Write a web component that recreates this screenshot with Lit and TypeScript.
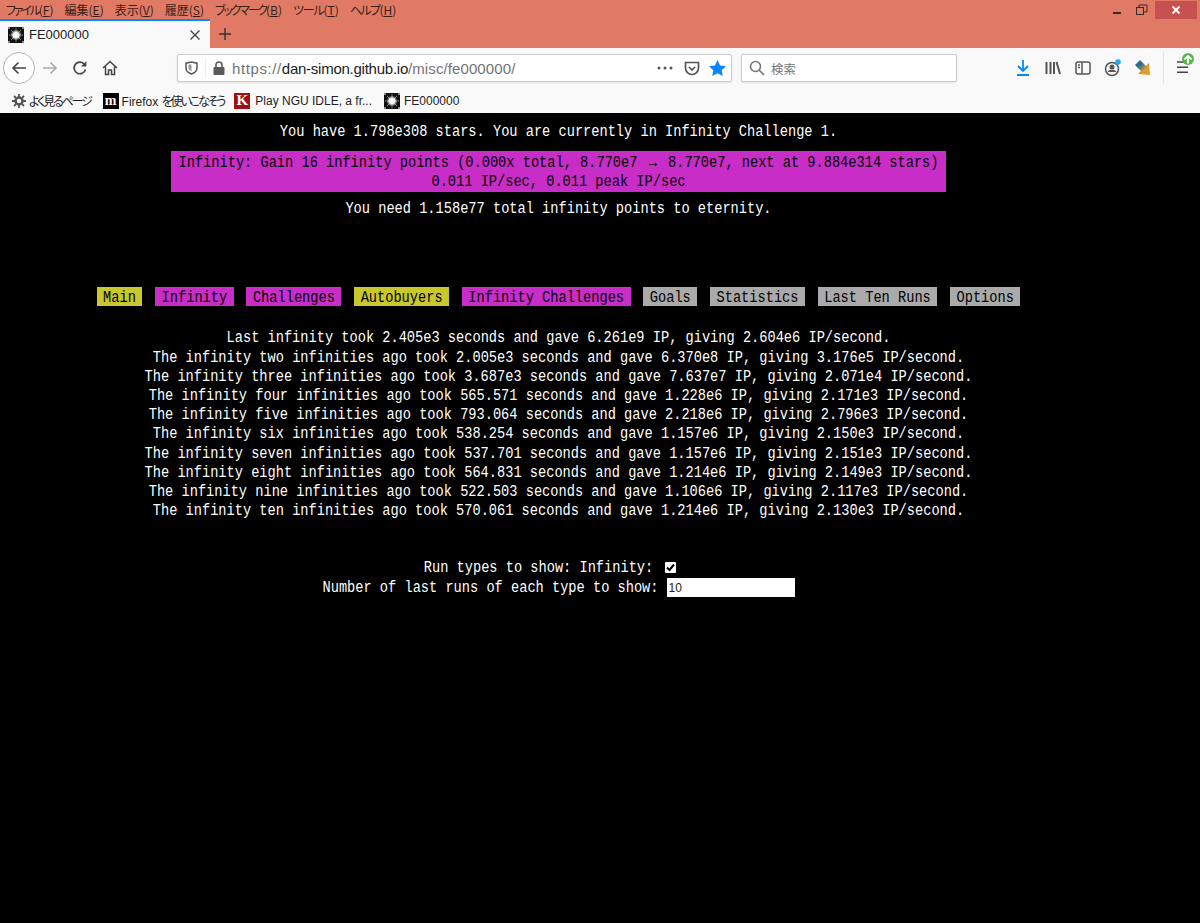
import { LitElement, html, css, svg } from "lit";
import { customElement } from "lit/decorators.js";

const favicon = (id: string) => svg`<svg width="16" height="16" viewBox="0 0 16 16"><defs><radialGradient id=${id}><stop offset="0" stop-color="#fff"/><stop offset=".45" stop-color="#fff"/><stop offset="1" stop-color="#fff" stop-opacity="0"/></radialGradient></defs><rect width="16" height="16" fill="#111"/><circle cx="8" cy="8" r="5.5" fill="url(#${id})"/><path d="M8 1v14M1 8h14M3 3l10 10M13 3 3 13" stroke="#fff" stroke-width=".7" opacity=".6"/><path d="M0 0h2v2H0ZM14 0h2v2h-2ZM0 14h2v2H0ZM14 14h2v2h-2Z" fill="#888"/></svg>`;

const runs: [string, string, string, string][] = [
  ["Last infinity", "2.405e3", "6.261e9", "2.604e6"],
  ["The infinity two infinities ago", "2.005e3", "6.370e8", "3.176e5"],
  ["The infinity three infinities ago", "3.687e3", "7.637e7", "2.071e4"],
  ["The infinity four infinities ago", "565.571", "1.228e6", "2.171e3"],
  ["The infinity five infinities ago", "793.064", "2.218e6", "2.796e3"],
  ["The infinity six infinities ago", "538.254", "1.157e6", "2.150e3"],
  ["The infinity seven infinities ago", "537.701", "1.157e6", "2.151e3"],
  ["The infinity eight infinities ago", "564.831", "1.214e6", "2.149e3"],
  ["The infinity nine infinities ago", "522.503", "1.106e6", "2.117e3"],
  ["The infinity ten infinities ago", "570.061", "1.214e6", "2.130e3"],
];

const tabs: [string, string][] = [
  ["Main", "y"],
  ["Infinity", "m"],
  ["Challenges", "m"],
  ["Autobuyers", "y"],
  ["Infinity Challenges", "m"],
  ["Goals", "g"],
  ["Statistics", "g"],
  ["Last Ten Runs", "g"],
  ["Options", "g"],
];

const menus: [string, string, number][] = [
  ["ファイル", "F", -2.2],
  ["編集", "E", 0],
  ["表示", "V", 0],
  ["履歴", "S", 0],
  ["ブックマーク", "B", -2.2],
  ["ツール", "T", -1.2],
  ["ヘルプ", "H", -1.6],
];

@customElement("app-root")
export class AppRoot extends LitElement {
  static styles = css`
    :host {
      display: block;
      height: 923px;
      background: #000;
      overflow: hidden;
      font-family: "Liberation Sans", "Noto Sans CJK JP", sans-serif;
    }
    .titlebar {
      background: #e07a64;
      height: 48px;
      display: flex;
      flex-direction: column;
    }
    .menubar {
      height: 19px;
      display: flex;
      padding-left: 6px;
      gap: 11px;
      font-size: 12px;
      line-height: 19px;
      color: #3a1d16;
      font-family: "Noto Sans CJK JP", sans-serif;
      font-feature-settings: "palt";
    }
    .menubar u { text-underline-offset: 1px; }
    .winctl {
      margin-left: auto;
      display: flex;
      align-items: center;
      margin-right: 3px;
    }
    .winctl .b {
      height: 18px;
      width: 25px;
      display: flex;
      align-items: center;
      justify-content: center;
    }
    .winctl .close { width: 42px; background: #c75050; margin-left: 1px; }
    .tabrow { height: 29px; display: flex; align-items: stretch; }
    .tab {
      width: 210px;
      background: #f9f9fa;
      border-top: 2px solid #0a84ff;
      box-sizing: border-box;
      display: flex;
      align-items: center;
      padding: 0 9px 0 8px;
      gap: 5px;
      font-size: 13px;
      color: #222;
    }
    .tab .t { flex: 1; }
    .newtab { width: 30px; display: flex; align-items: center; justify-content: center; }
    .toolbar {
      height: 40px;
      background: #f9f9fa;
      display: flex;
      align-items: center;
      box-sizing: border-box;
      padding-left: 3px;
    }
    .back {
      width: 32px;
      height: 32px;
      border-radius: 50%;
      border: 1px solid #b4b4b6;
      background: #fff;
      box-sizing: border-box;
      display: flex;
      align-items: center;
      justify-content: center;
    }
    .tb { width: 30px; display: flex; align-items: center; justify-content: center; }
    .urlbar {
      margin-left: 52px;
      width: 555px;
      height: 28px;
      box-sizing: border-box;
      border: 1px solid #ccc;
      border-radius: 2px;
      background: #fff;
      box-shadow: 0 1px 2px rgba(0,0,0,.1);
      display: flex;
      align-items: center;
      font-size: 15px;
      color: #737373;
      padding-left: 7px;
    }
    .urlbar .sep { width: 1px; height: 20px; background: #ececec; margin: 0 7px; }
    .urlbar .host { color: #1c1c1c; letter-spacing: -0.25px; }
    .urlbar .scheme { letter-spacing: 0.6px; }
    .urlbar .url { margin-left: 7px; flex: 1; white-space: nowrap; letter-spacing: 0.1px; }
    .urlbar .ico { display: flex; align-items: center; margin-right: 9px; }
    .urlbar .dots { margin-right: 11px; }
    .urlbar .star { margin-right: 5px; }
    .search {
      margin-left: 9px;
      width: 216px;
      height: 28px;
      box-sizing: border-box;
      border: 1px solid #ccc;
      border-radius: 2px;
      background: #fff;
      box-shadow: 0 1px 2px rgba(0,0,0,.1);
      display: flex;
      align-items: center;
      padding-left: 7px;
      gap: 6px;
      font-size: 12.5px;
      color: #777;
      font-family: "Noto Sans CJK JP", sans-serif;
    }
    .right { margin-left: 51px; display: flex; align-items: center; }
    .right .r { width: 30px; display: flex; align-items: center; justify-content: center; }
    .right .r.menu { width: 20px; }
    .right .r.menu svg { overflow: visible; }
    .right .divider { width: 1px; height: 32px; background: #e4e4e6; margin: 0 11px 0 5px; }
    .bookmarks {
      height: 25px;
      background: #f9f9fa;
      display: flex;
      align-items: center;
      padding-left: 12px;
      font-size: 12px;
      color: #222;
      font-feature-settings: "palt";
      font-family: "Liberation Sans", "Noto Sans CJK JP", sans-serif;
    }
    .bm { display: flex; align-items: center; gap: 3px; white-space: nowrap; }
    .jp1 { letter-spacing: -2.2px; }
    .jp2 { letter-spacing: -2.1px; }
    .m1 { margin-left: 12px; }
    .m2 { margin-left: 10px; gap: 5px; }
    .m3 { margin-left: 12px; gap: 4px; }
    .icoM, .icoK {
      width: 16px; height: 16px; display: flex; align-items: center; justify-content: center;
      color: #fff; font-family: "Liberation Serif", serif; font-weight: 700;
    }
    .icoM { background: #000; font-size: 14px; line-height: 12px; }
    .icoK { background: #a01010; font-size: 15px; }

    .page {
      width: 1117px;
      color: #fff;
      font-family: "Liberation Mono", monospace;
      font-size: 13.67px;
      line-height: 19.2px;
      text-align: center;
      white-space: nowrap;
    }
    .x { display: inline-block; transform: scaleY(1.2); }
    .arrow { display: inline-block; width: 14.2px; }
    .have { padding-top: 9px; }
    .inf {
      width: 775px;
      margin: 10px 0 0 171px;
      box-sizing: border-box;
      padding: 2px 0;
      background: #c82dc8;
      color: #000;
      height: 41px;
    }
    .need { padding-top: 7px; }
    .tabs {
      display: flex;
      justify-content: center;
      gap: 12.75px;
      margin-top: 69px;
    }
    .tabs div { padding: 0 6.5px; height: 19px; line-height: 21px; color: #000; }
    .y { background: #c8c82d; }
    .m { background: #c82dc8; }
    .g { background: #aaa; }
    .log { margin-top: 22px; }
    .opts { margin-top: 37px; }
    .opts .row { display: flex; justify-content: center; align-items: center; height: 20px; }
    .opts .row.first { padding-right: 17px; }
    .cb {
      width: 11px;
      height: 11px;
      background: #fff;
      border-radius: 1px;
      margin-left: 12px;
      display: flex;
      align-items: center;
      justify-content: center;
    }
    .num {
      margin-left: 8px;
      width: 128px;
      height: 19px;
      box-sizing: border-box;
      background: #fff;
      color: #222;
      text-align: left;
      padding-left: 2px;
      font-family: "Liberation Sans", sans-serif;
      font-size: 12px;
      line-height: 20px;
    }
  `;

  render() {
    return html`
      <div class="titlebar">
        <div class="menubar">
          ${menus.map(([a, k, s]) => html`<span><span style="letter-spacing:${s}px">${a}</span>(<u>${k}</u>)</span>`)}
          <div class="winctl">
            <div class="b"><svg width="10" height="10"><rect x="1" y="7" width="8" height="2" fill="#3a2a26"/></svg></div>
            <div class="b"><svg width="12" height="12" fill="none" stroke="#3a2a26" stroke-width="1"><rect x="0.5" y="3.5" width="7" height="7"/><path d="M3 3V1h8v7H8"/></svg></div>
            <div class="b close"><svg width="10" height="10" stroke="#fff" stroke-width="1.8"><path d="M1.5 1.5l7 7M8.5 1.5l-7 7"/></svg></div>
          </div>
        </div>
        <div class="tabrow">
          <div class="tab">
            ${favicon("fa")}
            <span class="t">FE000000</span>
            <svg width="12" height="12" stroke="#444" stroke-width="1.4"><path d="M1.5 1.5l9 9M10.5 1.5l-9 9"/></svg>
          </div>
          <div class="newtab"><svg width="14" height="14" stroke="#333" stroke-width="1.4"><path d="M7 1v12M1 7h12"/></svg></div>
        </div>
      </div>
      <div class="toolbar">
        <div class="back"><svg width="16" height="16" fill="none" stroke="#444" stroke-width="1.6"><path d="M15 8H2M7.5 2.5 2 8l5.5 5.5"/></svg></div>
        <div class="tb"><svg width="16" height="16" fill="none" stroke="#aaa" stroke-width="1.6"><path d="M1 8h13M8.5 2.5 14 8l-5.5 5.5"/></svg></div>
        <div class="tb"><svg width="16" height="16" fill="none" stroke="#444" stroke-width="1.7"><path d="M13.5 9.5A5.8 5.8 0 1 1 12 3.8"/><path d="M14.4 1v5.4H9" stroke="none" fill="#444"/></svg></div>
        <div class="tb"><svg width="16" height="16" fill="none" stroke="#444" stroke-width="1.5"><path d="M1 8 8 1.5 15 8M3.5 6.5V14.5H6.5V10H9.5V14.5H12.5V6.5"/></svg></div>
        <div class="urlbar">
          <svg width="13" height="14"><path d="M1 2.2 6.5 1 12 2.2V7c0 3-2.5 5-5.5 6C3.5 12 1 10 1 7Z" fill="none" stroke="#555" stroke-width="1.5"/><path d="M3.5 3.5H6.5V10.500C4.5 9.500 3.5 8.500 3.5 6.500Z" fill="#999"/></svg>
          <div class="sep"></div>
          <svg width="12" height="14" fill="#5a5a5a"><rect x="0.5" y="6" width="11" height="8" rx="1"/><path d="M3 6V4a3 3 0 0 1 6 0v2" fill="none" stroke="#5a5a5a" stroke-width="1.6"/></svg>
          <span class="url"><span class="scheme">https://</span><span class="host">dan-simon.github.io</span>/misc/fe000000/</span>
          <span class="ico dots"><svg width="16" height="4" fill="#555"><circle cx="2" cy="2" r="1.5"/><circle cx="8" cy="2" r="1.5"/><circle cx="14" cy="2" r="1.5"/></svg></span>
          <span class="ico"><svg width="16" height="15" fill="none" stroke="#555" stroke-width="1.7"><path d="M1.5 1.5h13V7a6.500 6.500 0 0 1-13 0Z"/><path d="M5 6l3 3 3-3"/></svg></span>
          <span class="ico star"><svg width="17" height="16" fill="#0a84ff"><path d="M8.500 0l2.600 5.400 5.900.8-4.300 4.100 1 5.700-5.200-2.800-5.200 2.800 1-5.700L0 6.200l5.900-.8Z"/></svg></span>
        </div>
        <div class="search">
          <svg width="16" height="16" fill="none" stroke="#777" stroke-width="1.6"><circle cx="6.500" cy="6.500" r="5"/><path d="M10 10l5 5"/></svg>
          <span>検索</span>
        </div>
        <div class="right">
          <div class="r"><svg width="14" height="16" fill="none" stroke="#0a84ff" stroke-width="1.8"><path d="M7 0v10M2 6l5 5 5-5M1 15h12"/></svg></div>
          <div class="r"><svg width="16" height="14" fill="none" stroke="#555" stroke-width="2"><path d="M1.500 1v12M5.500 1v12M9 1v12M11.500 1l3.500 12"/></svg></div>
          <div class="r"><svg width="16" height="14" fill="none" stroke="#555" stroke-width="1.5"><rect x="1" y="1" width="14" height="12" rx="2"/><path d="M7 1v12M3 4h2M3 6.500h2"/></svg></div>
          <div class="r"><svg width="18" height="18"><circle cx="8" cy="10" r="6.500" fill="none" stroke="#555" stroke-width="1.5"/><circle cx="8" cy="8" r="2.500" fill="#555"/><path d="M3.500 13c1-3 8-3 9 0" fill="#555"/><circle cx="14" cy="3" r="2.800" fill="#1eaaf1"/></svg></div>
          <div class="r"><svg width="16" height="16"><defs><linearGradient id="ext" x1="0" y1="0" x2="1" y2="1"><stop offset=".35" stop-color="#2c6a92"/><stop offset=".65" stop-color="#e39a2a"/></linearGradient></defs><path d="M0 5 5 0 11 6 14 3 15 15 3 14 6 11Z" fill="url(#ext)"/></svg></div>
          <div class="divider"></div>
          <div class="r menu"><svg width="20" height="28" fill="none"><path d="M2 8h11M2 13.300h11M2 18.300h11" stroke="#444" stroke-width="1.5"/><circle cx="13" cy="5" r="6" fill="#54b948"/><path d="M13 9.500V2M9.500 5.500 13 2l3.500 3.500" stroke="#fff" stroke-width="1.8"/></svg></div>
        </div>
      </div>
      <div class="bookmarks">
        <span class="bm"><svg width="14" height="14" fill="none" stroke="#555"><circle cx="7" cy="7" r="3.500" stroke-width="2.500"/><path d="M7 0v3M7 11v3M0 7h3M11 7h3M2 2l2 2M10 10l2 2M12 2l-2 2M4 10l-2 2" stroke-width="1.8"/></svg><span class="jp1">よく見るページ</span></span>
        <span class="bm m1"><span class="icoM">m</span><span>Firefox <span class="jp2">を使いこなそう</span></span></span>
        <span class="bm m2"><span class="icoK">K</span><span>Play NGU IDLE, a fr...</span></span>
        <span class="bm m3">${favicon("fb")}<span>FE000000</span></span>
      </div>
      <div class="page">
        <div class="have"><span class="x">You have 1.798e308 stars. You are currently in Infinity Challenge 1.</span></div>
        <div class="inf"><div><span class="x">Infinity: Gain 16 infinity points (0.000x total, 8.770e7 <span class="arrow">→</span> 8.770e7, next at 9.884e314 stars)</span></div><div><span class="x">0.011 IP/sec, 0.011 peak IP/sec</span></div></div>
        <div class="need"><span class="x">You need 1.158e77 total infinity points to eternity.</span></div>
        <div class="tabs">
          ${tabs.map(([t, c]) => html`<div class=${c}><span class="x">${t}</span></div>`)}
        </div>
        <div class="log">
          ${runs.map(([n, s, g, r]) => html`<div><span class="x">${n} took ${s} seconds and gave ${g} IP, giving ${r} IP/second.</span></div>`)}
        </div>
        <div class="opts">
          <div class="row first"><span class="x">Run types to show: Infinity:</span><span class="cb"><svg width="9" height="9" fill="none" stroke="#000" stroke-width="2"><path d="M1 4.500 3.500 7 8 1.500"/></svg></span></div>
          <div class="row"><span class="x">Number of last runs of each type to show:</span><span class="num">10</span></div>
        </div>
      </div>
    `;
  }
}
